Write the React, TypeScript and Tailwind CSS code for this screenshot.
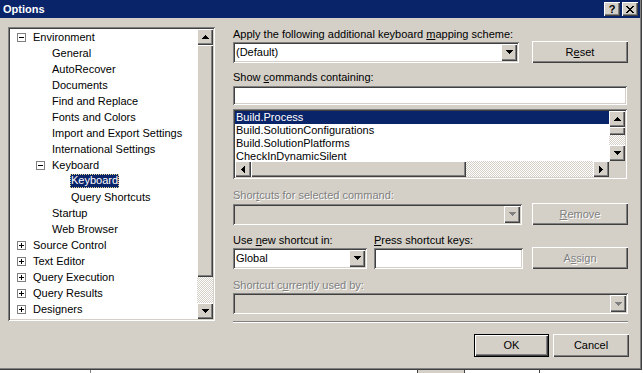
import React from "react";

const raised =
  "bg-[#d4d0c8] shadow-[inset_1px_1px_#ffffff,inset_-1px_-1px_#404040,inset_-2px_-2px_#808080]";
const sunken =
  "shadow-[inset_1px_1px_#808080,inset_-1px_-1px_#ffffff,inset_2px_2px_#404040,inset_-2px_-2px_#d4d0c8]";
const dither =
  "bg-[image:repeating-conic-gradient(#d4d0c8_0%_25%,#ffffff_0%_50%)] bg-[length:2px_2px]";
const dim = "text-[#808080] [text-shadow:1px_1px_0_#ffffff]";

const arrows: Record<string, { d: string; w: number; h: number }> = {
  down: { d: "M0 0h7v1h-1v1h-1v1h-1v1h-1v-1h-1v-1h-1v-1h-1z", w: 7, h: 4 },
  up: { d: "M3 0h1v1h1v1h1v1h1v1h-7v-1h1v-1h1v-1h1z", w: 7, h: 4 },
  right: { d: "M0 0h1v1h1v1h1v1h1v1h-1v1h-1v1h-1v1h-1z", w: 4, h: 7 },
  left: { d: "M3 0h1v7h-1v-1h-1v-1h-1v-1h-1v-1h1v-1h1v-1h1z", w: 4, h: 7 },
};

function Arrow({ dir, color = "#000000" }: { dir: string; color?: string }) {
  const a = arrows[dir];
  return (
    <svg width={a.w} height={a.h} shapeRendering="crispEdges">
      <path d={a.d} fill={color} />
    </svg>
  );
}

function ScrollBtn({ dir, color }: { dir: string; color?: string }) {
  return (
    <div className={`w-[16px] h-[16px] shrink-0 flex items-center justify-center ${raised}`}>
      <Arrow dir={dir} color={color} />
    </div>
  );
}

function Combo({ w, value, disabled }: { w: string; value?: string; disabled?: boolean }) {
  return (
    <div className={`flex h-[21px] p-[2px] ${sunken} ${disabled ? "bg-[#d4d0c8]" : "bg-white"} ${w}`}>
      <div className="flex-1 flex items-center pl-[1px]">{value}</div>
      <div className={`w-[16px] h-full flex items-center justify-center ${raised}`}>
        <Arrow dir="down" color={disabled ? "#808080" : "#000000"} />
      </div>
    </div>
  );
}

function Btn({ w, children, disabled, isDefault }: { w: string; children: React.ReactNode; disabled?: boolean; isDefault?: boolean }) {
  if (isDefault) {
    return (
      <div className={`h-[23px] border border-black ${w}`}>
        <div className={`h-full flex items-center justify-center ${raised}`}>{children}</div>
      </div>
    );
  }
  return (
    <div className={`h-[22px] flex items-center justify-center ${raised} ${disabled ? dim : ""} ${w}`}>
      {children}
    </div>
  );
}

function Expander({ open }: { open: boolean }) {
  return (
    <svg width="9" height="9" shapeRendering="crispEdges">
      <rect x="0.5" y="0.5" width="8" height="8" fill="#ffffff" stroke="#808080" />
      <rect x="2" y="4" width="5" height="1" fill="#000000" />
      {!open && <rect x="4" y="2" width="1" height="5" fill="#000000" />}
    </svg>
  );
}

type Node = { t: string; lvl: number; box?: "open" | "closed"; sel?: boolean };

const tree: Node[] = [
  { t: "Environment", lvl: 0, box: "open" },
  { t: "General", lvl: 1 },
  { t: "AutoRecover", lvl: 1 },
  { t: "Documents", lvl: 1 },
  { t: "Find and Replace", lvl: 1 },
  { t: "Fonts and Colors", lvl: 1 },
  { t: "Import and Export Settings", lvl: 1 },
  { t: "International Settings", lvl: 1 },
  { t: "Keyboard", lvl: 1, box: "open" },
  { t: "Keyboard", lvl: 2, sel: true },
  { t: "Query Shortcuts", lvl: 2 },
  { t: "Startup", lvl: 1 },
  { t: "Web Browser", lvl: 1 },
  { t: "Source Control", lvl: 0, box: "closed" },
  { t: "Text Editor", lvl: 0, box: "closed" },
  { t: "Query Execution", lvl: 0, box: "closed" },
  { t: "Query Results", lvl: 0, box: "closed" },
  { t: "Designers", lvl: 0, box: "closed" },
];

const indent: Record<number, string> = { 0: "pl-[7px]", 1: "pl-[26px]", 2: "pl-[45px]" };

function Tree() {
  return (
    <div className={`w-[207px] h-[294px] p-[2px] bg-white flex shrink-0 ${sunken}`}>
      <div className="flex-1 overflow-hidden">
        {tree.map((n, i) => (
          <div key={i} className={`h-[16px] flex items-center whitespace-nowrap ${indent[n.lvl]}`}>
            <div className="w-[16px] shrink-0 flex items-center">
              {n.box && <Expander open={n.box === "open"} />}
            </div>
            {n.sel ? (
              <span className="-ml-[1px] px-[1px] h-[14px] leading-[13px] bg-[#0a246a] text-white outline-1 outline-dotted outline-[#e8d890] -outline-offset-1">
                {n.t}
              </span>
            ) : (
              <span className="leading-[16px]">{n.t}</span>
            )}
          </div>
        ))}
      </div>
      <div className="w-[16px] flex flex-col">
        <ScrollBtn dir="up" />
        <div className={`h-[232px] ${raised}`} />
        <div className={`flex-1 ${dither}`} />
        <ScrollBtn dir="down" />
      </div>
    </div>
  );
}

const commands = [
  "Build.Process",
  "Build.SolutionConfigurations",
  "Build.SolutionPlatforms",
  "CheckInDynamicSilent",
];

function CommandList() {
  return (
    <div className={`mt-[4px] w-[394px] h-[70px] p-[2px] bg-white flex flex-col ${sunken}`}>
      <div className="flex h-[50px]">
        <div className="flex-1 overflow-hidden">
          {commands.map((c, i) => (
            <div
              key={c}
              className={`h-[13px] leading-[13px] pl-[1px] whitespace-nowrap ${i === 0 ? "bg-[#0a246a] text-white" : ""}`}
            >
              {c}
            </div>
          ))}
        </div>
        <div className="w-[16px] flex flex-col">
          <ScrollBtn dir="up" />
          <div className={`h-[8px] ${raised}`} />
          <div className={`flex-1 ${dither}`} />
          <ScrollBtn dir="down" />
        </div>
      </div>
      <div className="flex h-[16px]">
        <ScrollBtn dir="left" />
        <div className={`w-[215px] ${raised}`} />
        <div className={`flex-1 ${dither}`} />
        <ScrollBtn dir="right" />
        <div className="w-[16px] bg-[#d4d0c8]" />
      </div>
    </div>
  );
}

function TitleBar() {
  const x = [
    "##....##",
    ".##..##.",
    "..####..",
    "...##...",
    "..####..",
    ".##..##.",
    "##....##",
  ];
  return (
    <div className="h-[18px] w-[640px] bg-[#0a246a] flex items-center justify-between pl-[3px] pr-[2px] shrink-0">
      <span className="text-white font-bold text-[11px]">Options</span>
      <div className="flex gap-[2px]">
        <div className={`w-[16px] h-[14px] flex items-center justify-center font-bold text-[11px] leading-[14px] ${raised}`}>
          ?
        </div>
        <div className={`w-[16px] h-[14px] flex items-center justify-center ${raised}`}>
          <svg width="8" height="7" shapeRendering="crispEdges">
            {x.map((row, y) =>
              row.split("").map((ch, xx) =>
                ch === "#" ? <rect key={`${y}-${xx}`} x={xx} y={y} width="1" height="1" fill="#000000" /> : null
              )
            )}
          </svg>
        </div>
      </div>
    </div>
  );
}

function RightPane() {
  return (
    <div className="w-[396px] flex flex-col">
      <div className="h-[14px] leading-[14px] whitespace-nowrap">
        Apply the following additional keyboard <u className="underline-offset-[1px]">m</u>apping scheme:
      </div>
      <div className="flex h-[22px] items-center gap-[13px]">
        <Combo w="w-[286px]" value="(Default)" />
        <Btn w="w-[96px]">
          <span>
            R<u className="underline-offset-[1px]">e</u>set
          </span>
        </Btn>
      </div>

      <div className="mt-[7px] h-[14px] leading-[14px]">
        Show <u className="underline-offset-[1px]">c</u>ommands containing:
      </div>
      <div className={`mt-[2px] w-[394px] h-[19px] bg-white ${sunken}`} />
      <CommandList />

      <div className={`mt-[9px] h-[14px] leading-[14px] ${dim}`}>
        Shor<u className="underline-offset-[1px]">t</u>cuts for selected command:
      </div>
      <div className="mt-[1px] flex h-[22px] items-center gap-[10px]">
        <Combo w="w-[289px]" disabled />
        <Btn w="w-[96px]" disabled>
          <span>
            <u className="underline-offset-[1px]">R</u>emove
          </span>
        </Btn>
      </div>

      <div className="mt-[8px] h-[14px] leading-[14px] flex">
        <div className="w-[141px]">
          Use <u className="underline-offset-[1px]">n</u>ew shortcut in:
        </div>
        <div>
          <u className="underline-offset-[1px]">P</u>ress shortcut keys:
        </div>
      </div>
      <div className="flex h-[22px] items-center">
        <Combo w="w-[134px]" value="Global" />
        <div className={`ml-[7px] w-[149px] h-[21px] bg-white ${sunken}`} />
        <div className="ml-[9px]">
          <Btn w="w-[96px]" disabled>
            <span>
              A<u className="underline-offset-[1px]">s</u>sign
            </span>
          </Btn>
        </div>
      </div>

      <div className={`mt-[9px] h-[14px] leading-[14px] ${dim}`}>
        Shortcut c<u className="underline-offset-[1px]">u</u>rrently used by:
      </div>
      <div className="mt-[1px]">
        <Combo w="w-[395px]" disabled />
      </div>

      <div className="mt-[7px] w-[395px] h-[2px] border-t border-[#808080] border-b border-b-white" />

      <div className="mt-[11px] flex justify-end gap-[4px]">
        <Btn w="w-[75px]" isDefault>
          OK
        </Btn>
        <div className={`h-[23px] w-[76px] flex items-center justify-center ${raised}`}>Cancel</div>
      </div>
    </div>
  );
}

export default function App() {
  return (
    <div className="w-[643px] h-[373px] bg-white overflow-hidden font-['Liberation_Sans',Arial,sans-serif] text-[11px] leading-[13px] text-black">
      <div className="w-[642px] h-[370px] bg-[#d4d0c8] shadow-[inset_-1px_-1px_#404040,inset_-2px_-2px_#808080] flex flex-col">
        <TitleBar />
        <div className="flex pl-[8px] pt-[9px] gap-[18px]">
          <Tree />
          <RightPane />
        </div>
      </div>
      <div className="h-[3px] flex">
        <div className="w-[90px]" />
        <div className="w-[1px] bg-[#808080]" />
        <div className="w-[326px]" />
        <div className="w-[1px] bg-[#404040]" />
        <div className="w-[46px] bg-[#d4d0c8]" />
        <div className="w-[1px] bg-[#404040]" />
        <div className="w-[74px]" />
        <div className="w-[1px] bg-[#404040]" />
      </div>
    </div>
  );
}
